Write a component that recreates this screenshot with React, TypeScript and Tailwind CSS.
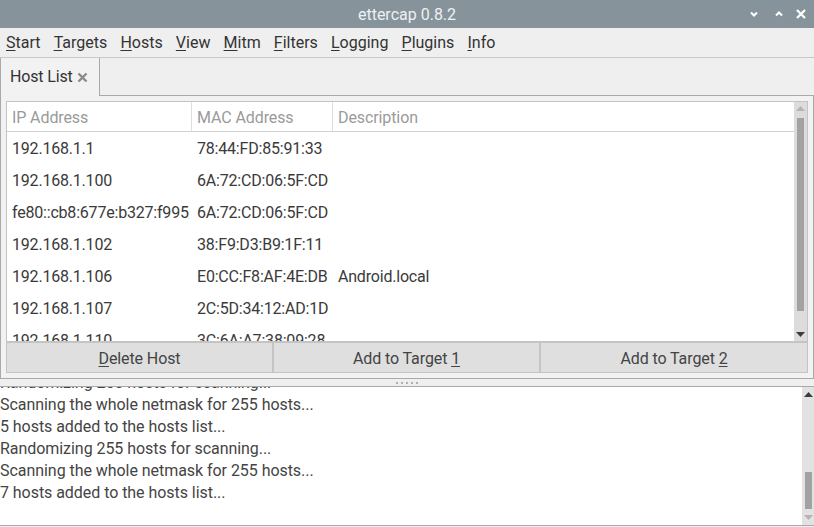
import React from 'react';

const MENUS = ['Start', 'Targets', 'Hosts', 'View', 'Mitm', 'Filters', 'Logging', 'Plugins', 'Info'];

const HOSTS = [
  { ip: '192.168.1.1', mac: '78:44:FD:85:91:33', desc: '' },
  { ip: '192.168.1.100', mac: '6A:72:CD:06:5F:CD', desc: '' },
  { ip: 'fe80::cb8:677e:b327:f995', mac: '6A:72:CD:06:5F:CD', desc: '' },
  { ip: '192.168.1.102', mac: '38:F9:D3:B9:1F:11', desc: '' },
  { ip: '192.168.1.106', mac: 'E0:CC:F8:AF:4E:DB', desc: 'Android.local' },
  { ip: '192.168.1.107', mac: '2C:5D:34:12:AD:1D', desc: '' },
  { ip: '192.168.1.110', mac: '3C:6A:A7:38:09:28', desc: '' },
];

const LOG = [
  'Randomizing 255 hosts for scanning...',
  'Scanning the whole netmask for 255 hosts...',
  '5 hosts added to the hosts list...',
  'Randomizing 255 hosts for scanning...',
  'Scanning the whole netmask for 255 hosts...',
  '7 hosts added to the hosts list...',
];

function Arrow({ up, color }: { up?: boolean; color: string }): JSX.Element {
  return (
    <svg width="9" height="5" viewBox="0 0 9 5">
      <path d={up ? 'M0 5 L4.5 0 L9 5 Z' : 'M0 0 L4.5 5 L9 0 Z'} fill={color} />
    </svg>
  );
}

function TitleBar(): JSX.Element {
  return (
    <div className="h-[28px] bg-[#87939b] relative flex items-center justify-center pt-[2px] shrink-0">
      <span className="text-[16px] text-[#eef1f3]">ettercap 0.8.2</span>
      <div className="absolute right-[8px] top-0 h-full flex items-center">
        <svg width="8" height="6" viewBox="0 0 8 6" className="mr-[17px]">
          <path d="M1 1.5 L4 4.5 L7 1.5" stroke="#fff" strokeWidth="2" fill="none" />
        </svg>
        <svg width="8" height="6" viewBox="0 0 8 6" className="mr-[13px]">
          <path d="M1 4.5 L4 1.5 L7 4.5" stroke="#fff" strokeWidth="2" fill="none" />
        </svg>
        <svg width="10" height="10" viewBox="0 0 10 10">
          <path d="M1 1 L9 9 M9 1 L1 9" stroke="#fff" strokeWidth="2.2" fill="none" />
        </svg>
      </div>
    </div>
  );
}

function MenuBar(): JSX.Element {
  return (
    <div className="h-[29px] flex items-center pl-[6px] gap-[13.15px] text-[16px] text-[#333] shrink-0">
      {MENUS.map((m) => (
        <span key={m}>
          <span className="underline underline-offset-2 decoration-1">{m[0]}</span>
          {m.slice(1)}
        </span>
      ))}
    </div>
  );
}

function TabRow(): JSX.Element {
  return (
    <div className="h-[39px] flex shrink-0 border-t border-[#c9c9c9]">
      <div className="w-[100px] h-full bg-[#f2f2f2] border-l border-r border-[#a9a9a9] flex items-center pl-[9px] gap-[4px] tracking-[-0.15px]">
        <span className="text-[16px] text-[#333]">Host List</span>
        <svg width="11" height="11" viewBox="0 0 11 11">
          <path d="M1.5 1.5 L9.5 9.5 M9.5 1.5 L1.5 9.5" stroke="#8a8a8a" strokeWidth="2.4" />
        </svg>
      </div>
      <div className="flex-1 border-b border-[#a9a9a9]" />
    </div>
  );
}

function HostList(): JSX.Element {
  return (
    <div className="h-[241px] border border-[#c4c4c4] bg-white flex">
      <div className="flex-1 overflow-hidden">
        <div className="h-[30px] flex items-center border-b border-[#d0d0d0] text-[#9a9a9a] text-[16px] tracking-[-0.1px]">
          <div className="w-[185px] pl-[5px] pt-[2px] h-full flex items-center border-r border-[#dedede]">IP Address</div>
          <div className="w-[141px] pl-[5px] pt-[2px] h-full flex items-center border-r border-[#dedede]">MAC Address</div>
          <div className="pl-[5px] pt-[2px]">Description</div>
        </div>
        {HOSTS.map((h) => (
          <div
            key={h.ip}
            className="h-[32px] pt-[2px] flex items-center text-[16px] text-[#3a3a3a] whitespace-nowrap tracking-[-0.2px]"
          >
            <div className="w-[185px] pl-[5px]">{h.ip}</div>
            <div className="w-[141px] pl-[5px]">{h.mac}</div>
            <div className="pl-[5px]">{h.desc}</div>
          </div>
        ))}
      </div>
      <div className="w-[13px] bg-[#dcdcdc] flex flex-col items-center py-[4px]">
        <Arrow up color="#b4b4b4" />
        <div className="mt-[7px] w-[7px] h-[193px] bg-[#a2a2a2]" />
        <div className="flex-1" />
        <Arrow color="#3c3c3c" />
      </div>
    </div>
  );
}

function Btn({ pre, mn, post, wide }: { pre: string; mn: string; post: string; wide?: boolean }): JSX.Element {
  return (
    <div
      className={`h-full pt-[2px] bg-[#dfdfdf] border border-[#c4c4c4] flex items-center justify-center text-[16px] text-[#444] tracking-[-0.1px] ${
        wide ? 'w-[268px]' : 'w-[267px]'
      }`}
    >
      <span>
        {pre}
        <span className="underline underline-offset-2 decoration-1">{mn}</span>
        {post}
      </span>
    </div>
  );
}

function LogPane(): JSX.Element {
  return (
    <div className="h-[140px] bg-white border-t border-b border-[#a9a9a9] flex shrink-0">
      <div className="flex-1 overflow-hidden">
        <div className="-mt-[15px]">
          {LOG.map((l, i) => (
            <div key={i} className="h-[22px] leading-[22px] text-[16px] text-[#444] whitespace-nowrap tracking-[-0.05px]">
              {l}
            </div>
          ))}
        </div>
      </div>
      <div className="w-[12px] bg-[#e2e2e2] flex flex-col items-center pt-[5px] pb-[5px]">
        <Arrow up color="#3c3c3c" />
        <div className="flex-1" />
        <div className="w-[7px] h-[37px] bg-[#a2a2a2] mb-[6px]" />
        <Arrow color="#b4b4b4" />
      </div>
    </div>
  );
}

export default function App(): JSX.Element {
  return (
    <div className="w-[814px] h-[527px] bg-[#efefef] flex flex-col overflow-hidden font-['Roboto',sans-serif]">
      <TitleBar />
      <MenuBar />
      <TabRow />
      <div className="h-[283px] bg-[#f2f2f2] border-l border-r border-b border-[#a9a9a9] p-[5px] shrink-0 flex flex-col">
        <HostList />
        <div className="h-[31px] flex">
          <Btn pre="" mn="D" post="elete Host" />
          <Btn pre="Add to Target " mn="1" post="" />
          <Btn pre="Add to Target " mn="2" post="" wide />
        </div>
      </div>
      <div className="h-[7px] flex items-center justify-center gap-[3px] shrink-0">
        {[0, 1, 2, 3, 4].map((i) => (
          <div key={i} className="w-[2px] h-[2px] bg-[#b0b0b0]" />
        ))}
      </div>
      <LogPane />
    </div>
  );
}
